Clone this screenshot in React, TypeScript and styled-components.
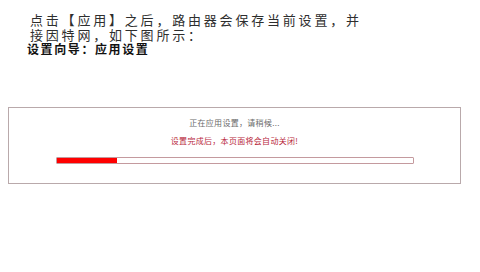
import styled, { createGlobalStyle } from "styled-components"

const GlobalStyle = createGlobalStyle`
    html, body {
        margin: 0;
        padding: 0;
        background: #fff;
    }
    body {
        width: 480px;
        height: 272px;
        overflow: hidden;
        font-family: "Noto Sans CJK SC", "Noto Sans", sans-serif;
    }
`

const progress = 0.17

export default function App() {
    return <Page>
        <GlobalStyle />
        <Intro>
            <Line>点击【应用】之后，路由器会保存当前设置，并</Line>
            <Line>接因特网，如下图所示：</Line>
            <Caption>设置向导：应用设置</Caption>
        </Intro>
        <Panel>
            <Status>正在应用设置，请稍候...</Status>
            <Notice>设置完成后，本页面将会自动关闭!</Notice>
            <Track>
                <Fill style={{ width: `${progress * 100}%` }} />
            </Track>
        </Panel>
    </Page>
}

const Page = styled.div`
    width: 480px;
    height: 272px;
    display: flex;
    flex-direction: column;
    padding: 12px 0 0 8px;
    box-sizing: border-box;
`
const Intro = styled.div`
    display: flex;
    flex-direction: column;
    padding-left: 22px;
    color: #2e2e2e;
`
const Line = styled.div`
    font-size: 13px;
    line-height: 15px;
    letter-spacing: 2.8px;
    white-space: nowrap;
`
const Caption = styled.div`
    font-size: 12px;
    line-height: 13px;
    font-weight: 700;
    letter-spacing: 1.6px;
    margin-left: -3px;
    color: #111;
`
const Panel = styled.div`
    margin-top: 52px;
    width: 453px;
    height: 77px;
    box-sizing: border-box;
    border: 1px solid #b9a9ab;
    display: flex;
    flex-direction: column;
    align-items: center;
    padding-top: 10px;
`
const Status = styled.div`
    font-size: 8px;
    line-height: 10px;
    color: #6a6a6a;
    letter-spacing: 0.3px;
`
const Notice = styled.div`
    margin-top: 8px;
    font-size: 8px;
    line-height: 10px;
    color: #b8283c;
    letter-spacing: 0.3px;
`
const Track = styled.div`
    margin-top: 11px;
    width: 358px;
    height: 7px;
    box-sizing: border-box;
    border: 1px solid #c49a9e;
    border-radius: 1px;
    background: #fff;
    display: flex;
`
const Fill = styled.div`
    height: 100%;
    background: #f00;
`
